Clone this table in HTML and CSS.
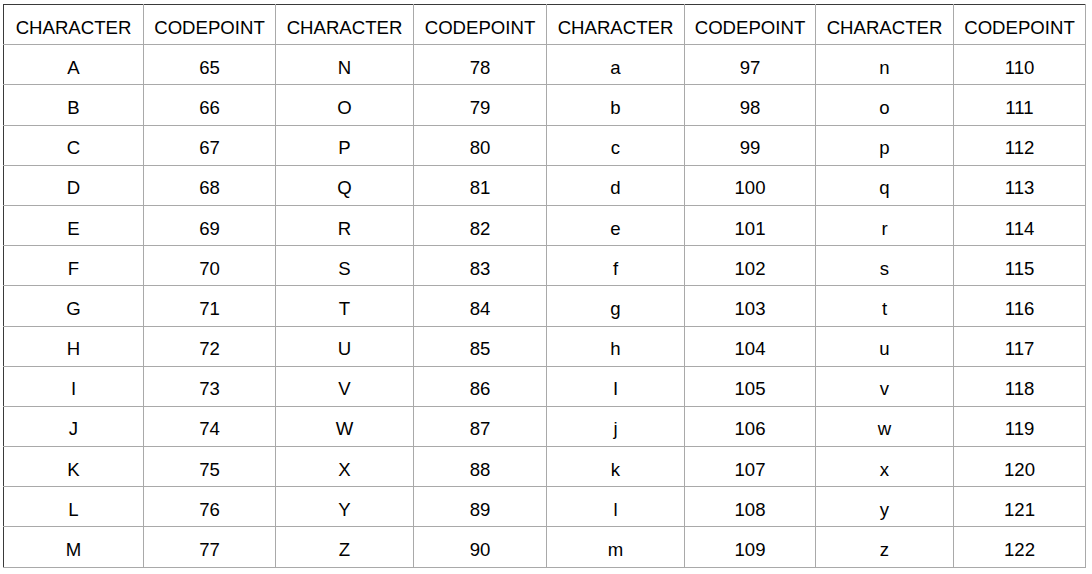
FILE: index.html
```html
<!DOCTYPE html>
<html>
<head>
<meta charset="utf-8">
<link rel="stylesheet" href="styles.css">
</head>
<body>
<div class="wrap">
<table class="codes">
<colgroup>
<col class="c1"><col class="c2"><col class="c3"><col class="c4"><col class="c5"><col class="c6"><col class="c7"><col class="c8">
</colgroup>
<thead>
<tr><th>CHARACTER</th><th>CODEPOINT</th><th>CHARACTER</th><th>CODEPOINT</th><th>CHARACTER</th><th>CODEPOINT</th><th>CHARACTER</th><th>CODEPOINT</th></tr>
</thead>
<tbody>
<tr><td>A</td><td>65</td><td>N</td><td>78</td><td>a</td><td>97</td><td>n</td><td>110</td></tr>
<tr><td>B</td><td>66</td><td>O</td><td>79</td><td>b</td><td>98</td><td>o</td><td>111</td></tr>
<tr><td>C</td><td>67</td><td>P</td><td>80</td><td>c</td><td>99</td><td>p</td><td>112</td></tr>
<tr><td>D</td><td>68</td><td>Q</td><td>81</td><td>d</td><td>100</td><td>q</td><td>113</td></tr>
<tr><td>E</td><td>69</td><td>R</td><td>82</td><td>e</td><td>101</td><td>r</td><td>114</td></tr>
<tr><td>F</td><td>70</td><td>S</td><td>83</td><td>f</td><td>102</td><td>s</td><td>115</td></tr>
<tr><td>G</td><td>71</td><td>T</td><td>84</td><td>g</td><td>103</td><td>t</td><td>116</td></tr>
<tr><td>H</td><td>72</td><td>U</td><td>85</td><td>h</td><td>104</td><td>u</td><td>117</td></tr>
<tr><td>I</td><td>73</td><td>V</td><td>86</td><td>I</td><td>105</td><td>v</td><td>118</td></tr>
<tr><td>J</td><td>74</td><td>W</td><td>87</td><td>j</td><td>106</td><td>w</td><td>119</td></tr>
<tr><td>K</td><td>75</td><td>X</td><td>88</td><td>k</td><td>107</td><td>x</td><td>120</td></tr>
<tr><td>L</td><td>76</td><td>Y</td><td>89</td><td>l</td><td>108</td><td>y</td><td>121</td></tr>
<tr><td>M</td><td>77</td><td>Z</td><td>90</td><td>m</td><td>109</td><td>z</td><td>122</td></tr>
</tbody>
</table>
</div>
</body>
</html>
```
FILE: styles.css
```css
html, body {
  margin: 0;
  padding: 0;
  background: #ffffff;
}
.wrap {
  padding: 4px 0 0 3px;
}
.codes {
  border-collapse: collapse;
  table-layout: fixed;
  width: 1083px;
  font-family: "Liberation Sans", Arial, sans-serif;
  font-size: 18.6px;
  color: #000000;
}
.c1 { width: 140px; }
.c2 { width: 132px; }
.c3 { width: 138px; }
.c4 { width: 133px; }
.c5 { width: 138px; }
.c6 { width: 131px; }
.c7 { width: 138px; }
.c8 { width: 132px; }
.codes th,
.codes td {
  border: 1px solid #a9a9a9;
  height: 33.2px;
  padding: 6px 0 0 0;
  text-align: center;
  vertical-align: middle;
  font-weight: normal;
  white-space: nowrap;
}
.codes th {
  border-top-color: #3a3a3a;
}
.codes tr > :first-child {
  border-left-color: #3a3a3a;
}
```
